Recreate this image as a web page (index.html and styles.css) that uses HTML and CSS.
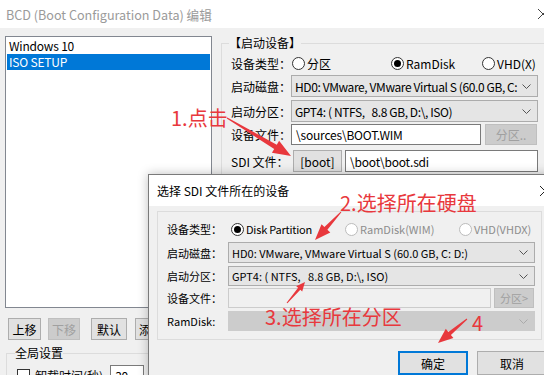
FILE: index.html
```html
<!DOCTYPE html>
<html lang="zh-CN">
<head>
  <meta charset="UTF-8" />
  <title>BCD 编辑</title>
  <link rel="stylesheet" href="styles.css">
</head>
<body>
  <div class="screen">
    <div class="win">
      <div class="titlebar">
        <span class="title">BCD (Boot Configuration Data) 编辑</span>
        <span class="close">
          <svg width="12" height="12" viewBox="0 0 12 12"><path d="M1 1L11 11M11 1L1 11" stroke="#444" stroke-width="1"/></svg>
        </span>
      </div>

      <div class="win-body">
        <div class="top">
          <div class="list">
            <div class="item">Windows 10</div>
            <div class="item sel">ISO SETUP</div>
          </div>

          <fieldset class="group boot">
            <legend>【启动设备】</legend>
            <div class="row r1">
              <span class="lbl">设备类型：</span>
              <span class="opt o1"><i class="radio"></i>分区</span>
              <span class="opt o2"><i class="radio on"></i>RamDisk</span>
              <span class="opt"><i class="radio"></i>VHD(X)</span>
            </div>
            <div class="row r2">
              <span class="lbl">启动磁盘：</span>
              <div class="combo w247"><span class="val">HD0: VMware, VMware Virtual S (60.0 GB, C: D:)</span><span class="chev"><svg width="9" height="5" viewBox="0 0 9 5"><path d="M0.5 0.5L4.5 4.5L8.5 0.5" fill="none" stroke="#555"/></svg></span></div>
            </div>
            <div class="row r3">
              <span class="lbl">启动分区：</span>
              <div class="combo w247"><span class="val">GPT4: ( NTFS,&nbsp;&nbsp; 8.8 GB, D:\, ISO)</span><span class="chev"><svg width="9" height="5" viewBox="0 0 9 5"><path d="M0.5 0.5L4.5 4.5L8.5 0.5" fill="none" stroke="#555"/></svg></span></div>
            </div>
            <div class="row r4">
              <span class="lbl">设备文件：</span>
              <div class="input w190">\sources\BOOT.WIM</div>
              <div class="btn off w52">分区..</div>
            </div>
            <div class="row r5">
              <span class="lbl">SDI 文件：</span>
              <div class="btn w49 boot-btn">[boot]</div>
              <div class="input w193">\boot\boot.sdi</div>
            </div>
          </fieldset>
        </div>

        <div class="btnrow">
          <div class="btn b-up">上移</div>
          <div class="btn off b-down">下移</div>
          <div class="btn b-def">默认</div>
          <div class="btn b-add">添加</div>
        </div>

        <fieldset class="group global">
          <legend>全局设置</legend>
          <div class="chkrow">
            <i class="check"></i>
            <span>卸载时间(秒)</span>
            <div class="input timeout">30</div>
          </div>
        </fieldset>
      </div>
    </div>

    <div class="dialog">
      <div class="dlg-title">
        <span>选择 SDI 文件所在的设备</span>
        <span class="close">
          <svg width="12" height="12" viewBox="0 0 12 12"><path d="M1 1L11 11M11 1L1 11" stroke="#222" stroke-width="1"/></svg>
        </span>
      </div>
      <div class="dlg-body">
        <fieldset class="dgroup">
          <div class="drow d1">
            <span class="lbl">设备类型：</span>
            <span class="opt d-o1"><i class="radio on"></i>Disk Partition</span>
            <span class="opt d-o2 dim"><i class="radio dis"></i>RamDisk(WIM)</span>
            <span class="opt dim"><i class="radio dis"></i>VHD(VHDX)</span>
          </div>
          <div class="drow d2">
            <span class="lbl">启动磁盘：</span>
            <div class="combo w307"><span class="val">HD0: VMware, VMware Virtual S (60.0 GB, C: D:)</span><span class="chev"><svg width="9" height="5" viewBox="0 0 9 5"><path d="M0.5 0.5L4.5 4.5L8.5 0.5" fill="none" stroke="#555"/></svg></span></div>
          </div>
          <div class="drow d3">
            <span class="lbl">启动分区：</span>
            <div class="combo w307"><span class="val">GPT4: ( NTFS,&nbsp;&nbsp; 8.8 GB, D:\, ISO)</span><span class="chev"><svg width="9" height="5" viewBox="0 0 9 5"><path d="M0.5 0.5L4.5 4.5L8.5 0.5" fill="none" stroke="#555"/></svg></span></div>
          </div>
          <div class="drow d4">
            <span class="lbl">设备文件：</span>
            <div class="input dis w263"></div>
            <div class="btn off w40">分区&gt;</div>
          </div>
          <div class="drow d5">
            <span class="lbl">RamDisk:</span>
            <div class="combo off w307"><span class="val"></span><span class="chev"><svg width="9" height="5" viewBox="0 0 9 5"><path d="M0.5 0.5L4.5 4.5L8.5 0.5" fill="none" stroke="#aaa"/></svg></span></div>
          </div>
        </fieldset>
        <div class="dlg-btns">
          <div class="btn primary">确定</div>
          <div class="btn cancel">取消</div>
        </div>
      </div>
    </div>

    <!-- red hand-drawn hints on top of the screenshot -->
    <svg class="marks" width="544" height="375" viewBox="0 0 544 375">
      <polygon points="226.7,118.4 274.2,148.9 271.9,152.8 291,156 279.1,140.8 276.8,144.7 227.3,117.6" />
      <polygon points="340.6,211.7 324.4,226.9 321.5,224.2 315,240 330.3,232.4 327.4,229.7 341.4,212.3" />
      <polygon points="287.4,303.3 300.3,289.8 302.2,291.4 305,282 296.2,286.2 298.1,287.8 286.6,302.7" />
      <polygon points="466.7,318.6 448.3,331.9 445.8,328.8 438,343 453.4,338 450.9,334.9 467.3,319.4" />
    </svg>
    <span class="note n1">1.点击</span>
    <span class="note n2">2.选择所在硬盘</span>
    <span class="note n3">3.选择所在分区</span>
    <span class="note n4">4</span>
  </div>
</body>
</html>
```

FILE: styles.css
```css
* {
  box-sizing: border-box;
}

body {
  margin: 0;
  font-family: "Noto Sans CJK SC", sans-serif;
  font-size: 12px;
  color: #000;
}

.screen {
  position: relative;
  width: 544px;
  height: 375px;
  overflow: hidden;
  background: #f0f0f0;
}

.win {
  width: 566px;
  height: 375px;
  background: #f0f0f0;
}

.titlebar {
  height: 28px;
  background: #fff;
  display: flex;
  align-items: center;
  justify-content: space-between;
  padding-left: 6px;
}

.title {
  font-size: 12.6px;
  color: #9a9a9a;
}

.close {
  width: 46px;
  display: flex;
  justify-content: center;
}

.close svg {
  display: block;
}

.win-body {
  padding: 8px 0 0 5px;
}

.top {
  display: flex;
  align-items: flex-start;
  gap: 9px;
}

.list {
  width: 207px;
  height: 272px;
  flex: none;
  background: #fff;
  border: 1px solid #828790;
  padding: 1px;
}

.item {
  height: 16px;
  line-height: 16px;
  padding-left: 2px;
  letter-spacing: -0.2px;
}

.item.sel {
  background: #0078d7;
  color: #fff;
}

.group {
  margin: 0;
  border: 1px solid #dcdcdc;
  min-width: 0;
}

.group legend {
  padding: 0;
  margin-left: -2px;
  line-height: 14px;
}

.boot {
  flex: 1;
  padding: 2px 0 10px 9px;
}

.row {
  display: flex;
  align-items: center;
  height: 22px;
}

.lbl {
  width: 60px;
  flex: none;
  white-space: nowrap;
}

.r2 { margin-top: 1px; }
.r3 { margin-top: 3px; }
.r4 { margin-top: 2px; height: 21px; }
.r5 { margin-top: 5px; }

.opt {
  display: flex;
  align-items: center;
  white-space: nowrap;
}

.o1 { width: 99px; margin-left: 1px; }
.o2 { width: 91px; }

.radio {
  width: 13px;
  height: 13px;
  flex: none;
  border: 1px solid #333;
  border-radius: 50%;
  background: #fff;
  margin-right: 2px;
  display: flex;
  align-items: center;
  justify-content: center;
}

.radio.on::after {
  content: "";
  width: 7px;
  height: 7px;
  border-radius: 50%;
  background: #000;
}

.radio.dis {
  border-color: #bcbcbc;
}

.dim {
  color: #8d8d8d;
}

.combo {
  height: 100%;
  display: flex;
  align-items: center;
  background: #e5e5e5;
  border: 1px solid #acacac;
  padding: 0 6px 0 3px;
}

.combo .val {
  flex: 1;
  overflow: hidden;
  white-space: nowrap;
  letter-spacing: -0.4px;
}

.combo .chev {
  width: 9px;
  margin-left: 3px;
  display: flex;
}

.combo.off {
  background: #cccccc;
  border-color: #cccccc;
}

.input {
  height: 100%;
  background: #fff;
  border: 1px solid #7a7a7a;
  padding-left: 4px;
  display: flex;
  align-items: center;
  white-space: nowrap;
  letter-spacing: -0.2px;
}

.input.dis {
  background: #f0f0f0;
  border-color: #cccccc;
}

.btn {
  height: 100%;
  display: flex;
  align-items: center;
  justify-content: center;
  background: #e1e1e1;
  border: 1px solid #adadad;
  white-space: nowrap;
}

.btn.off {
  background: #cccccc;
  border-color: #bfbfbf;
  color: #a0a0a0;
}

.w247 { width: 247px; }
.w190 { width: 190px; }
.w193 { width: 193px; margin-left: 3px; padding-left: 4px; }
.w52 { width: 52px; margin-left: 4px; }
.w49 { width: 49px; }
.boot-btn { margin-left: 2px; }

.btnrow {
  display: flex;
  height: 22px;
  margin-top: 10px;
}

.b-up { width: 33px; margin-left: 3px; }
.b-down { width: 32px; margin-left: 7px; }
.b-def { width: 36px; margin-left: 11px; }
.b-add { width: 36px; margin-left: 8px; justify-content: flex-start; padding-left: 3px; }

.global {
  width: 200px;
  margin: 6px 0 0 1px;
  padding: 5px 0 0 10px;
}

.chkrow {
  display: flex;
  align-items: center;
  height: 20px;
}

.check {
  width: 13px;
  height: 13px;
  border: 1px solid #333;
  background: #fff;
  margin-right: 5px;
}

.timeout {
  width: 34px;
  margin-left: 7px;
}

/* SDI device picker, floating over the main window */
.dialog {
  position: absolute;
  left: 148px;
  top: 174px;
  width: 421px;
  height: 215px;
  background: #f0f0f0;
  border: 1px solid #7a7a7a;
  box-shadow: 0 0 10px rgba(0, 0, 0, 0.25);
}

.dlg-title {
  height: 31px;
  background: #fff;
  display: flex;
  align-items: center;
  justify-content: space-between;
  padding-left: 8px;
}

.dlg-body {
  padding: 5px 0 0 8px;
  font-size: 11px;
}

.dgroup {
  margin: 0;
  width: 385px;
  border: 1px solid #dcdcdc;
  padding: 7px 0 8px 9px;
  min-width: 0;
}

.drow {
  display: flex;
  align-items: center;
  height: 20px;
}

.drow .lbl {
  width: 61px;
}

.d2 { margin-top: 3px; height: 21px; }
.d3 { margin-top: 3px; }
.d4 { margin-top: 2px; }
.d5 { margin-top: 3px; }

.d-o1 { width: 114px; margin-left: 3px; }
.d-o2 { width: 114px; }

.d-o1 {
  letter-spacing: -0.2px;
}

.dgroup .combo .val {
  letter-spacing: 0;
}

.w307 { width: 307px; }
.w263 { width: 263px; }
.w40 { width: 40px; margin-left: 3px; }

.dlg-btns {
  display: flex;
  gap: 9px;
  height: 24px;
  margin-top: 11px;
  padding-left: 241px;
  font-size: 12px;
}

.dlg-btns .btn {
  width: 70px;
}

.btn.primary {
  border: 2px solid #0078d7;
}

.marks {
  position: absolute;
  left: 0;
  top: 0;
  fill: #e8383d;
  pointer-events: none;
}

.note {
  position: absolute;
  color: #e8383d;
  font-size: 20px;
  line-height: 20px;
  white-space: nowrap;
}

.n1 { left: 171px; top: 108px; }
.n2 { left: 340px; top: 193px; }
.n3 { left: 265px; top: 307px; }
.n4 { left: 472px; top: 313px; }
```
